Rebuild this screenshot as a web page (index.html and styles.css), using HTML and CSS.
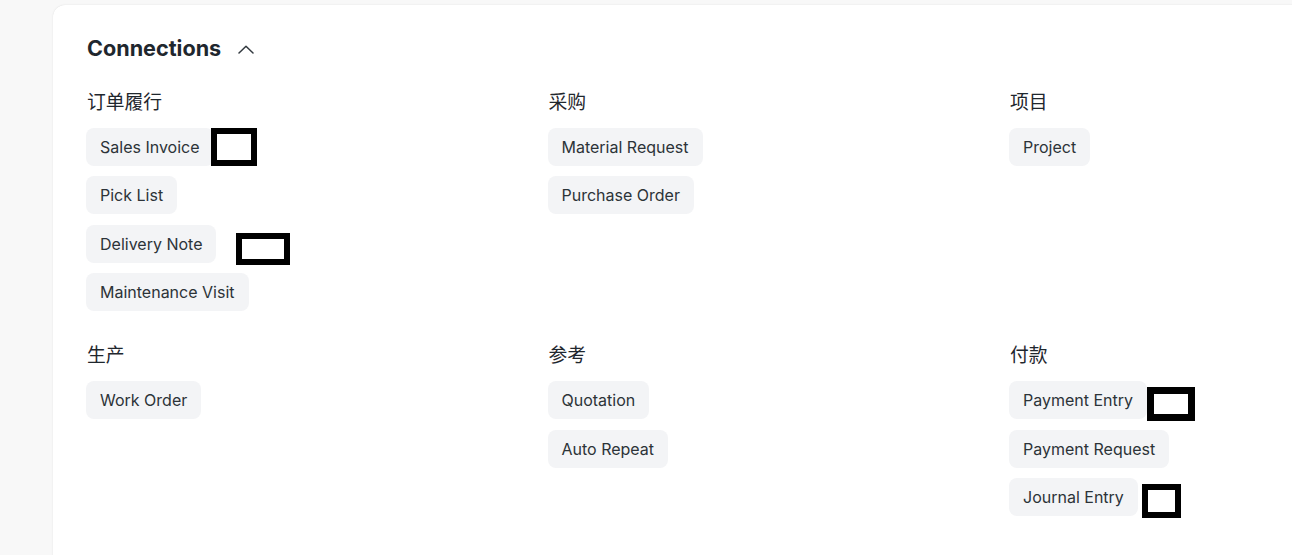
FILE: index.html
```html
<!DOCTYPE html>
<html lang="zh">
<head>
<meta charset="utf-8">
<title>Connections</title>
<link rel="stylesheet" href="styles.css">
</head>
<body>
<div class="card">
  <div class="head">
    <h2 class="title">Connections</h2>
    <svg class="chev" width="16" height="9" viewBox="0 0 16 9"><path d="M1 8 L8 1.2 L15 8" fill="none" stroke="#333a40" stroke-width="1.5" stroke-linecap="round" stroke-linejoin="round"/></svg>
  </div>
  <div class="grid">
    <section class="group">
      <div class="label">订单履行</div>
      <div class="pills">
        <div class="item"><span class="pill">Sales Invoice</span><span class="redact r-sales"></span></div>
        <div class="item"><span class="pill">Pick List</span></div>
        <div class="item"><span class="pill">Delivery Note</span><span class="redact r-delivery"></span></div>
        <div class="item"><span class="pill">Maintenance Visit</span></div>
      </div>
    </section>
    <section class="group">
      <div class="label">采购</div>
      <div class="pills">
        <div class="item"><span class="pill">Material Request</span></div>
        <div class="item"><span class="pill">Purchase Order</span></div>
      </div>
    </section>
    <section class="group">
      <div class="label">项目</div>
      <div class="pills">
        <div class="item"><span class="pill">Project</span></div>
      </div>
    </section>
    <section class="group">
      <div class="label">生产</div>
      <div class="pills">
        <div class="item"><span class="pill">Work Order</span></div>
      </div>
    </section>
    <section class="group">
      <div class="label">参考</div>
      <div class="pills">
        <div class="item"><span class="pill">Quotation</span></div>
        <div class="item"><span class="pill">Auto Repeat</span></div>
      </div>
    </section>
    <section class="group">
      <div class="label">付款</div>
      <div class="pills">
        <div class="item"><span class="pill">Payment Entry</span><span class="redact r-payment"></span></div>
        <div class="item"><span class="pill">Payment Request</span></div>
        <div class="item"><span class="pill">Journal Entry</span><span class="redact r-journal"></span></div>
      </div>
    </section>
  </div>
</div>
</body>
</html>
```
FILE: styles.css
```css
html, body {
  margin: 0;
  padding: 0;
}
body {
  background: #f8f8f8;
  font-family: Inter, "Noto Sans CJK SC", sans-serif;
  color: #1f272e;
  overflow: hidden;
  height: 555px;
  padding: 5px 0 0 53px;
  box-sizing: border-box;
}
.card {
  background: #ffffff;
  border-radius: 12px;
  box-shadow: 0 0 1px rgba(0,0,0,0.12), 0 0 3px rgba(0,0,0,0.04);
  width: 1300px;
  min-height: 600px;
  padding: 29px 34px 0 34px;
  box-sizing: border-box;
}
.head {
  display: flex;
  align-items: center;
  gap: 17px;
  height: 28px;
}
.title {
  margin: 0;
  font-size: 21.6px;
  font-weight: 700;
  line-height: 28px;
  color: #1f272e;
}
.chev {
  display: block;
  margin-top: 2px;
}
.grid {
  display: grid;
  grid-template-columns: 461.5px 461.5px 461.5px;
  row-gap: 31px;
  margin-top: 27px;
}
.label {
  font-family: "Noto Sans CJK SC", sans-serif;
  font-size: 18.8px;
  line-height: 24px;
  color: #1f272e;
  margin-bottom: 15px;
}
.pills {
  display: flex;
  flex-direction: column;
  align-items: flex-start;
  gap: 10.4px;
  margin-left: -1px;
}
.item {
  position: relative;
  display: flex;
}
.pill {
  display: inline-flex;
  align-items: center;
  height: 38px;
  padding: 0 14px;
  border-radius: 8px;
  background: #f3f4f6;
  font-size: 16px;
  color: #2c3338;
  white-space: nowrap;
  box-sizing: border-box;
}
.redact {
  position: absolute;
  background: #ffffff;
  border: 6px solid #000000;
  box-sizing: border-box;
}
.r-sales { left: 125px; top: 0; width: 46px; height: 38px; }
.r-delivery { left: 150px; top: 8px; width: 54px; height: 32px; }
.r-payment { left: 138px; top: 6px; width: 48px; height: 34px; border-width: 7px; }
.r-journal { left: 133px; top: 6px; width: 39px; height: 34px; }
```
